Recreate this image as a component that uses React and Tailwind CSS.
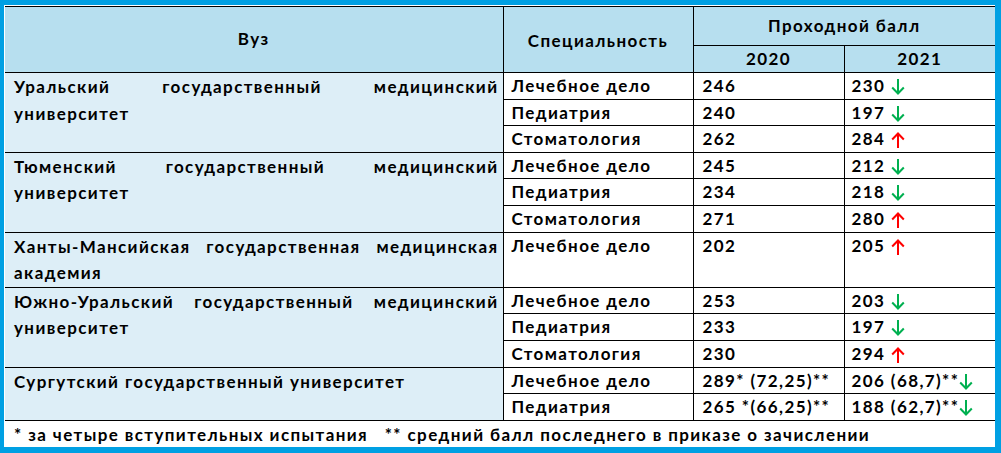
import React from 'react';

const Down = () => (
  <svg width="14" height="17" viewBox="0 0 14 17" className="inline-block align-[-3px]">
    <path d="M7 1V15.5M1.2 9.5L7 15.5L12.8 9.5" fill="none" stroke="#00b050" strokeWidth="2" />
  </svg>
);

const Up = () => (
  <svg width="14" height="17" viewBox="0 0 14 17" className="inline-block align-[-4px]">
    <path d="M7 16V1.5M1.2 7.5L7 1.5L12.8 7.5" fill="none" stroke="#ff0000" strokeWidth="2" />
  </svg>
);

const groups = [
  {
    name: 'Уральский государственный медицинский университет',
    rows: [
      ['Лечебное дело', '246', '230', 'down'],
      ['Педиатрия', '240', '197', 'down'],
      ['Стоматология', '262', '284', 'up'],
    ],
  },
  {
    name: 'Тюменский государственный медицинский университет',
    rows: [
      ['Лечебное дело', '245', '212', 'down'],
      ['Педиатрия', '234', '218', 'down'],
      ['Стоматология', '271', '280', 'up'],
    ],
  },
  {
    name: 'Ханты-Мансийская государственная медицинская академия',
    tall: true,
    rows: [['Лечебное дело', '202', '205', 'up']],
  },
  {
    name: 'Южно-Уральский государственный медицинский университет',
    rows: [
      ['Лечебное дело', '253', '203', 'down'],
      ['Педиатрия', '233', '197', 'down'],
      ['Стоматология', '230', '294', 'up'],
    ],
  },
  {
    name: 'Сургутский государственный  университет',
    rows: [
      ['Лечебное дело', '289* (72,25)**', '206 (68,7)**', 'down', true],
      ['Педиатрия', '265 *(66,25)**', '188 (62,7)**', 'down', true],
    ],
  },
];

const cell = 'border border-black align-top';

export default function App() {
  return (
    <div className="w-[1001px] h-[453px] bg-[#00a0e3] pt-[5px] pl-[4px] pr-[6px] pb-[6px]">
      <div className="bg-white pt-[1px] pl-[1px] h-full">
        <table
          className="w-[990px] table-fixed border-collapse text-[17px] font-bold text-black tracking-[1.4px]"
          style={{ fontFamily: 'Lato, "Open Sans", sans-serif' }}
        >
          <colgroup>
            <col className="w-[498px]" />
            <col className="w-[190px]" />
            <col className="w-[151px]" />
            <col className="w-[151px]" />
          </colgroup>
          <thead className="bg-[#b7dfef]">
            <tr className="h-[39px]">
              <th rowSpan={2} className="border-t border-b border-r border-black font-bold text-center align-middle pb-[2px]">
                Вуз
              </th>
              <th rowSpan={2} className="border border-black font-bold text-center align-middle pt-[2px]">
                Специальность
              </th>
              <th colSpan={2} className="border-t border-b border-l border-black font-bold text-center align-middle">
                Проходной балл
              </th>
            </tr>
            <tr className="h-[27px]">
              <th className="border border-black font-bold text-center align-middle">2020</th>
              <th className="border-t border-b border-l border-black font-bold text-center align-middle">2021</th>
            </tr>
          </thead>
          <tbody>
            {groups.map((g) =>
              g.rows.map((r, i) => (
                <tr key={g.name + i} className={g.tall ? 'h-[53px]' : 'h-[26.6px]'}>
                  {i === 0 && (
                    <td
                      rowSpan={g.rows.length}
                      className="border-t border-b border-r border-black align-top bg-[#ddeef7] pl-[9px] pr-[4px] pt-[1px] leading-[26.6px] text-justify"
                    >
                      {g.name}
                    </td>
                  )}
                  <td className={`${cell} pl-[8px] pt-[2px] leading-[22px]`}>{r[0]}</td>
                  <td className={`${cell} pl-[9px] pt-[2px] leading-[22px] whitespace-pre`}>{r[1]}</td>
                  <td className="border-t border-b border-l border-black align-top pl-[7px] pt-[2px] leading-[22px] whitespace-pre">
                    {r[2]}
                    {r[4] ? '' : ' '}
                    {r[3] === 'down' ? <Down /> : <Up />}
                  </td>
                </tr>
              ))
            )}
            <tr className="h-[29px]">
              <td colSpan={4} className="border-t border-black align-middle pl-[9px] whitespace-pre">
                {'* за четыре вступительных испытания   ** средний балл последнего в приказе о зачислении'}
              </td>
            </tr>
          </tbody>
        </table>
      </div>
    </div>
  );
}
